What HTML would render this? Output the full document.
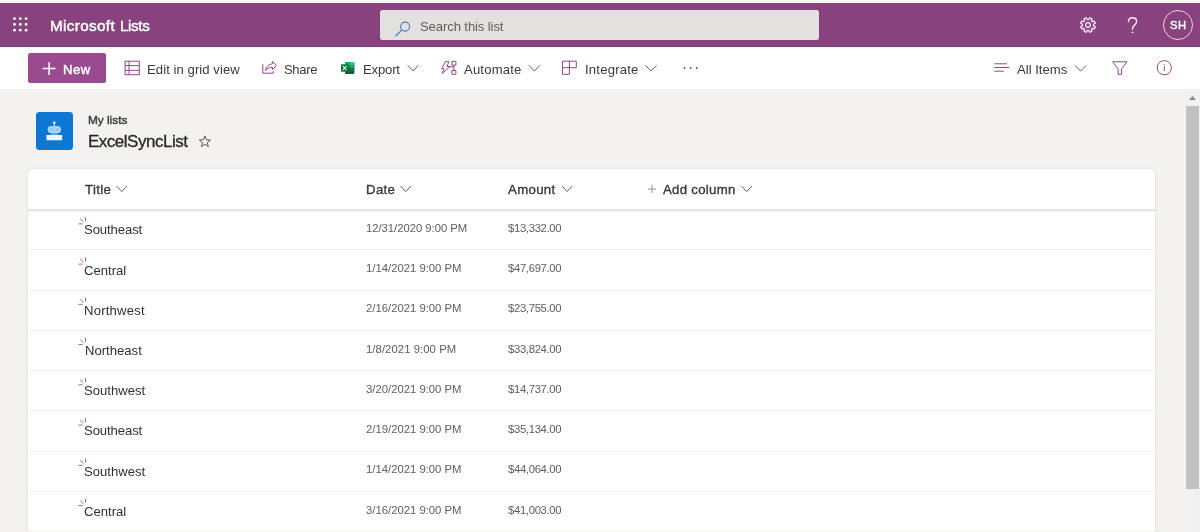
<!DOCTYPE html>
<html lang="en">
<head>
<meta charset="utf-8">
<title>ExcelSyncList - Microsoft Lists</title>
<style>
html,body{margin:0;padding:0}
body{width:1200px;height:532px;overflow:hidden;background:#f3f2f1;position:relative;
 font-family:"Liberation Sans",sans-serif;color:#323130;-webkit-font-smoothing:antialiased}
*{box-sizing:border-box}
.abs{position:absolute}
.t{position:absolute;white-space:nowrap;line-height:1;display:block;margin:0;will-change:transform}
svg{position:absolute;overflow:visible}
/* suite header */
#topline{left:0;top:0;width:1200px;height:3px;background:#faf7fa}
#suite{left:0;top:3px;width:1200px;height:44px;background:#88437f;border-bottom:1px solid #7a3c72}
#search{left:379.5px;top:10.4px;width:439.8px;height:29.8px;background:#e3e1df;border-radius:2.5px}
#avatar{left:1163px;top:10px;width:30px;height:30px;border-radius:50%;border:1.2px solid #e9cfe5}
/* command bar */
#cmd{left:0;top:47px;width:1200px;height:42px;background:#fff}
#newbtn{left:28.3px;top:53.1px;width:77.6px;height:30px;background:#9a4b90;border-radius:2.5px}
/* list */
#tile{left:35.7px;top:112px;width:37.5px;height:37.5px;border-radius:3.5px;background:#0c78d4}
#card{left:28.2px;top:169px;width:1126.8px;height:380px;background:#fff;border-radius:5px;
 box-shadow:0 0.5px 2.5px rgba(0,0,0,.13)}
.hline{position:absolute;left:28.2px;width:1126.8px;height:1px;background:#f2f1f0}
#hdrline{top:209px;height:1.6px;background:#e4e3e2;box-shadow:0 1px 2px rgba(0,0,0,.07)}
/* scrollbar */
#sbtrack{left:1185px;top:89px;width:15px;height:443px;background:#f1f1f1}
#sbthumb{left:1186.2px;top:106px;width:13px;height:383px;background:#c1c1c1}
#ms1{left:50.44px;top:18.00px;font-size:15.20px;font-weight:400;-webkit-text-stroke:0.44px #ffffff;color:#ffffff;letter-spacing:0.374px}
#ms2{left:120.38px;top:18.00px;font-size:15.20px;font-weight:400;-webkit-text-stroke:0.44px #ffffff;color:#ffffff;letter-spacing:-0.357px}
#srch{left:420.01px;top:20.00px;font-size:13.10px;font-weight:400;color:#605e5c;letter-spacing:-0.110px}
#sh{left:1169.94px;top:20.00px;font-size:11.20px;font-weight:400;-webkit-text-stroke:0.44px #ffffff;color:#ffffff;letter-spacing:0.589px}
#new{left:63.22px;top:63.00px;font-size:13.10px;font-weight:400;-webkit-text-stroke:0.44px #ffffff;color:#ffffff;letter-spacing:0.460px}
#edit{left:147.41px;top:63.00px;font-size:13.10px;font-weight:400;color:#3b3a39;letter-spacing:0.067px}
#share{left:284.11px;top:63.00px;font-size:13.10px;font-weight:400;color:#3b3a39;letter-spacing:-0.365px}
#export{left:362.82px;top:63.00px;font-size:13.10px;font-weight:400;color:#3b3a39;letter-spacing:-0.168px}
#auto{left:463.85px;top:63.00px;font-size:13.10px;font-weight:400;color:#3b3a39;letter-spacing:0.174px}
#integ{left:584.78px;top:63.00px;font-size:13.10px;font-weight:400;color:#3b3a39;letter-spacing:0.211px}
#allit{left:1017.25px;top:63.00px;font-size:13.10px;font-weight:400;color:#3b3a39;letter-spacing:-0.001px}
#mylists{left:87.97px;top:115.00px;font-size:11.80px;font-weight:400;-webkit-text-stroke:0.44px #3b3a39;color:#3b3a39;letter-spacing:0.000px}
#lname{left:87.74px;top:133.00px;font-size:17.00px;font-weight:400;-webkit-text-stroke:0.26px #252423;color:#252423;letter-spacing:-0.490px}
#hTitle{left:85.00px;top:183.00px;font-size:13.20px;font-weight:400;-webkit-text-stroke:0.37px #3b3a39;color:#3b3a39;letter-spacing:0.328px}
#hDate{left:365.84px;top:183.00px;font-size:13.20px;font-weight:400;-webkit-text-stroke:0.37px #3b3a39;color:#3b3a39;letter-spacing:0.357px}
#hAmt{left:507.85px;top:183.00px;font-size:13.20px;font-weight:400;-webkit-text-stroke:0.37px #3b3a39;color:#3b3a39;letter-spacing:0.338px}
#hAdd{left:662.66px;top:183.00px;font-size:13.20px;font-weight:400;-webkit-text-stroke:0.37px #3b3a39;color:#3b3a39;letter-spacing:0.298px}
#rt0{left:83.54px;top:223.00px;font-size:13.10px;font-weight:400;color:#323130;letter-spacing:-0.091px}
#rd0{left:365.97px;top:223.00px;font-size:11.30px;font-weight:400;color:#605e5c;letter-spacing:-0.030px}
#ra0{left:507.76px;top:223.00px;font-size:11.30px;font-weight:400;color:#605e5c;letter-spacing:-0.326px}
#rt1{left:83.98px;top:264.00px;font-size:13.10px;font-weight:400;color:#323130;letter-spacing:0.000px}
#rd1{left:366.21px;top:263.00px;font-size:11.30px;font-weight:400;color:#605e5c;letter-spacing:0.000px}
#ra1{left:507.76px;top:263.00px;font-size:11.30px;font-weight:400;color:#605e5c;letter-spacing:-0.326px}
#rt2{left:84.01px;top:304.00px;font-size:13.10px;font-weight:400;color:#323130;letter-spacing:0.214px}
#rd2{left:366.21px;top:303.00px;font-size:11.30px;font-weight:400;color:#605e5c;letter-spacing:0.000px}
#ra2{left:507.76px;top:303.00px;font-size:11.30px;font-weight:400;color:#605e5c;letter-spacing:-0.326px}
#rt3{left:84.58px;top:344.00px;font-size:13.10px;font-weight:400;color:#323130;letter-spacing:0.000px}
#rd3{left:365.97px;top:344.00px;font-size:11.30px;font-weight:400;color:#605e5c;letter-spacing:0.066px}
#ra3{left:507.76px;top:344.00px;font-size:11.30px;font-weight:400;color:#605e5c;letter-spacing:-0.326px}
#rt4{left:83.98px;top:384.00px;font-size:13.10px;font-weight:400;color:#323130;letter-spacing:0.000px}
#rd4{left:366.21px;top:384.00px;font-size:11.30px;font-weight:400;color:#605e5c;letter-spacing:0.000px}
#ra4{left:507.76px;top:384.00px;font-size:11.30px;font-weight:400;color:#605e5c;letter-spacing:-0.326px}
#rt5{left:83.54px;top:424.00px;font-size:13.10px;font-weight:400;color:#323130;letter-spacing:-0.091px}
#rd5{left:366.21px;top:424.00px;font-size:11.30px;font-weight:400;color:#605e5c;letter-spacing:0.000px}
#ra5{left:507.76px;top:424.00px;font-size:11.30px;font-weight:400;color:#605e5c;letter-spacing:-0.326px}
#rt6{left:83.98px;top:465.00px;font-size:13.10px;font-weight:400;color:#323130;letter-spacing:0.000px}
#rd6{left:366.21px;top:464.00px;font-size:11.30px;font-weight:400;color:#605e5c;letter-spacing:0.000px}
#ra6{left:507.76px;top:464.00px;font-size:11.30px;font-weight:400;color:#605e5c;letter-spacing:-0.326px}
#rt7{left:83.98px;top:505.00px;font-size:13.10px;font-weight:400;color:#323130;letter-spacing:0.000px}
#rd7{left:366.21px;top:505.00px;font-size:11.30px;font-weight:400;color:#605e5c;letter-spacing:0.000px}
#ra7{left:507.76px;top:505.00px;font-size:11.30px;font-weight:400;color:#605e5c;letter-spacing:-0.326px}
</style>
</head>
<body>
<div class="abs" id="topline"></div>
<header role="banner">
<div class="abs" id="suite"></div>

<svg id="waffle" style="left:0;top:0" width="1" height="1" fill="#fff">
<circle cx="14.5" cy="18.6" r="1.4"/>
<circle cx="20.3" cy="18.6" r="1.4"/>
<circle cx="26.1" cy="18.6" r="1.4"/>
<circle cx="14.5" cy="24.4" r="1.4"/>
<circle cx="20.3" cy="24.4" r="1.4"/>
<circle cx="26.1" cy="24.4" r="1.4"/>
<circle cx="14.5" cy="30.2" r="1.4"/>
<circle cx="20.3" cy="30.2" r="1.4"/>
<circle cx="26.1" cy="30.2" r="1.4"/>
</svg>
<div class="abs" id="search"></div>
<svg id="srchico" style="left:0;top:0" width="1" height="1" fill="none" stroke="#4f7fba" stroke-width="1.15" stroke-linecap="round">
<circle cx="405.1" cy="26.6" r="4.5"/><path d="M401.8 30 L395.8 36"/></svg>
<svg id="gear" style="left:1078.8px;top:16.2px" width="18" height="18" viewBox="0 0 18 18" fill="none" stroke="#fbeef9" stroke-width="1.25" stroke-linejoin="round">
<path d="M14.45 9.77 L16.26 10.68 L15.32 12.95 L13.39 12.31 L12.31 13.39 L12.95 15.32 L10.68 16.26 L9.77 14.45 L8.23 14.45 L7.32 16.26 L5.05 15.32 L5.69 13.39 L4.61 12.31 L2.68 12.95 L1.74 10.68 L3.55 9.77 L3.55 8.23 L1.74 7.32 L2.68 5.05 L4.61 5.69 L5.69 4.61 L5.05 2.68 L7.32 1.74 L8.23 3.55 L9.77 3.55 L10.68 1.74 L12.95 2.68 L12.31 4.61 L13.39 5.69 L15.32 5.05 L16.26 7.32 L14.45 8.23Z"/><circle cx="9" cy="9" r="2.3"/></svg>
<svg id="help" style="left:0;top:0" width="1" height="1" fill="none" stroke="#fbeef9" stroke-width="1.35" stroke-linecap="round">
<path d="M1128.4 21.8 C1128.4 19.3 1130.2 17.7 1132.6 17.7 C1135 17.7 1136.6 19.3 1136.6 21.4 C1136.6 24.9 1132.4 25.3 1132.4 29.2"/><circle cx="1132.4" cy="32.3" r="0.6" fill="#fff" stroke-width="0.5"/></svg>
<div class="abs" id="avatar"></div>

<span class="t" id="ms1">Microsoft </span>
<span class="t" id="ms2">Lists</span>
<span class="t" id="srch">Search this list</span>
<span class="t" id="sh">SH</span>
</header>
<nav aria-label="Command bar">
<div class="abs" id="cmd"></div>

<div class="abs" id="newbtn"></div>
<svg id="plus" style="left:0;top:0" width="1" height="1" stroke="#fff" stroke-width="1.5" fill="none"><path d="M49.1 62.2 V75 M42.7 68.6 H55.5"/></svg>
<svg id="icogrid" style="left:0;top:0" width="1" height="1" fill="none" stroke="#8c4a86" stroke-width="1"><rect x="125.1" y="61.2" width="14.2" height="13.5"/><path d="M129 61.2 V74.7 M125.1 65.6 H139.3 M125.1 70.3 H139.3"/></svg>
<svg id="icoshare" style="left:0;top:0" width="1" height="1" fill="none" stroke="#8c4a86" stroke-width="1" stroke-linejoin="round"><path d="M262.8 64.3 V73.2 H273.3 V71.2"/><path d="M272.4 61.6 L276.5 65.6 L272.4 69.6 V67.4 C269.3 67.3 267.2 68.3 265.6 70.4 C265.9 66.6 268.4 64.2 272.4 63.9 Z"/></svg>
<svg id="icoxl" style="left:0;top:0" width="1" height="1">
<rect x="345" y="62" width="9.3" height="12" rx="0.7" fill="#185c37"/>
<rect x="345" y="62" width="4.7" height="3" fill="#21a366"/><rect x="349.6" y="62" width="4.7" height="3" fill="#33c481"/>
<rect x="345" y="65" width="4.7" height="3" fill="#107c41"/><rect x="349.6" y="65" width="4.7" height="3" fill="#21a366"/>
<rect x="345" y="68" width="4.7" height="3" fill="#185c37"/><rect x="349.6" y="68" width="4.7" height="3" fill="#107c41"/>
<rect x="341" y="64.3" width="7.4" height="7.4" rx="0.7" fill="#107c41"/>
<path d="M343 66 L346.4 70 M346.4 66 L343 70" stroke="#fff" stroke-width="1.1" fill="none"/>
</svg>
<svg class="chev" style="left:0;top:0" width="1" height="1"><path d="M407.80 65.30 L413.10 71.00 L418.40 65.30" fill="none" stroke="#605e5c" stroke-width="1.00"/></svg>
<svg id="icoauto" style="left:0;top:0" width="1" height="1" fill="none" stroke="#8c4a86" stroke-width="1" stroke-linejoin="round"><path d="M445.3 61.7 H448.9 L446.9 66.5 H450 L442.2 73.4 L444.1 68.6 H441.6 Z"/><rect x="451.9" y="61.3" width="4" height="3.8"/><rect x="451.9" y="70.5" width="4" height="3.8"/><path d="M453.9 65.1 V70.5 M450 66.8 H453.9"/></svg>
<svg class="chev" style="left:0;top:0" width="1" height="1"><path d="M528.90 65.30 L534.35 71.10 L539.80 65.30" fill="none" stroke="#605e5c" stroke-width="1.00"/></svg>
<svg id="icointeg" style="left:0;top:0" width="1" height="1" fill="none" stroke="#8c4a86" stroke-width="1"><path d="M562.5 61.2 H576.3 V67.7 H562.5 Z M569.4 61.2 V74.3 H562.5 V67.7"/></svg>
<svg class="chev" style="left:0;top:0" width="1" height="1"><path d="M645.40 65.30 L651.00 70.90 L656.60 65.30" fill="none" stroke="#605e5c" stroke-width="1.00"/></svg>
<svg id="more" style="left:0;top:0" width="1" height="1" fill="#3b3a39"><circle cx="684.5" cy="68.1" r="0.95"/><circle cx="690.7" cy="68.1" r="0.95"/><circle cx="696.8" cy="68.1" r="0.95"/></svg>
<svg id="icoview" style="left:0;top:0" width="1" height="1" fill="none" stroke="#8c4a86" stroke-width="1"><path d="M994.3 63.8 H1007 M994.3 67.5 H1009.3 M994.3 71.2 H1003.7"/></svg>
<svg class="chev" style="left:0;top:0" width="1" height="1"><path d="M1075.10 65.50 L1080.55 71.10 L1086.00 65.50" fill="none" stroke="#605e5c" stroke-width="1.00"/></svg>
<svg id="icofilter" style="left:0;top:0" width="1" height="1" fill="none" stroke="#8c4a86" stroke-width="1" stroke-linejoin="round"><path d="M1112.6 61.8 H1127 L1121.6 68.8 V74.3 H1118.1 V68.8 Z"/></svg>
<svg id="icoinfo" style="left:0;top:0" width="1" height="1" fill="none" stroke="#8c4a86" stroke-width="1"><circle cx="1164.3" cy="67.7" r="7.1"/><path d="M1164.3 66.4 V71"/><circle cx="1164.3" cy="64.7" r="0.4" fill="#8c4a86" stroke-width="0.5"/></svg>

<span class="t" id="new">New</span>
<span class="t" id="edit">Edit in grid view</span>
<span class="t" id="share">Share</span>
<span class="t" id="export">Export</span>
<span class="t" id="auto">Automate</span>
<span class="t" id="integ">Integrate</span>
<span class="t" id="allit">All Items</span>
</nav>
<main>

<div class="abs" id="tile"></div>
<svg id="robot" style="left:-0.3px;top:0" width="1" height="1">
<circle cx="54.3" cy="122.8" r="1.35" fill="#e8f3fc"/><rect x="53.8" y="123" width="1" height="3.4" fill="#cfe6f9"/>
<rect x="47.7" y="126" width="13.3" height="7.2" rx="3.4" fill="#a9d3f5"/>
<circle cx="51.6" cy="129.3" r="1.5" fill="#8cc2f0"/><circle cx="57" cy="129.3" r="1.5" fill="#8cc2f0"/>
<rect x="51" y="133.2" width="6.6" height="1.8" fill="#5aa6e6"/>
<rect x="46.4" y="134.9" width="15.8" height="5.3" rx="0.6" fill="#eef6fd"/>
</svg>
<svg id="star" style="left:0;top:0" width="1" height="1" fill="none" stroke="#55534f" stroke-width="0.95" stroke-linejoin="miter"><path d="M204.90 135.90 L206.37 139.78 L210.51 139.98 L207.28 142.57 L208.37 146.57 L204.90 144.30 L201.43 146.57 L202.52 142.57 L199.29 139.98 L203.43 139.78Z"/></svg>
<div class="abs" id="card"></div>
<div class="hline" id="hdrline"></div>
<div class="hline" style="top:249.43px"></div>
<div class="hline" style="top:289.66px"></div>
<div class="hline" style="top:329.89px"></div>
<div class="hline" style="top:370.12px"></div>
<div class="hline" style="top:410.35px"></div>
<div class="hline" style="top:450.58px"></div>
<div class="hline" style="top:490.81px"></div>
<div class="hline" style="top:531.04px"></div>
<svg id="newglyphs" style="left:0;top:0" width="1" height="1" fill="none" stroke="#a0609b" stroke-width="0.95"><path d="M78.4 223.90 H82.7 M80.2 218.90 L83.5 222.00 M85.5 217.20 V221.10"/><path d="M78.4 264.13 H82.7 M80.2 259.13 L83.5 262.23 M85.5 257.43 V261.33"/><path d="M78.4 304.36 H82.7 M80.2 299.36 L83.5 302.46 M85.5 297.66 V301.56"/><path d="M78.4 344.59 H82.7 M80.2 339.59 L83.5 342.69 M85.5 337.89 V341.79"/><path d="M78.4 384.82 H82.7 M80.2 379.82 L83.5 382.92 M85.5 378.12 V382.02"/><path d="M78.4 425.05 H82.7 M80.2 420.05 L83.5 423.15 M85.5 418.35 V422.25"/><path d="M78.4 465.28 H82.7 M80.2 460.28 L83.5 463.38 M85.5 458.58 V462.48"/><path d="M78.4 505.51 H82.7 M80.2 500.51 L83.5 503.61 M85.5 498.81 V502.71"/></svg>
<svg class="chev" style="left:0;top:0" width="1" height="1"><path d="M116.50 186.00 L121.75 191.60 L127.00 186.00" fill="none" stroke="#605e5c" stroke-width="1.00"/></svg>
<svg class="chev" style="left:0;top:0" width="1" height="1"><path d="M400.60 186.00 L405.75 191.60 L410.90 186.00" fill="none" stroke="#605e5c" stroke-width="1.00"/></svg>
<svg class="chev" style="left:0;top:0" width="1" height="1"><path d="M562.00 186.00 L567.10 191.60 L572.20 186.00" fill="none" stroke="#605e5c" stroke-width="1.00"/></svg>
<svg class="chev" style="left:0;top:0" width="1" height="1"><path d="M741.50 186.00 L746.70 191.60 L751.90 186.00" fill="none" stroke="#605e5c" stroke-width="1.00"/></svg>
<svg id="addplus" style="left:0;top:0" width="1" height="1" fill="none" stroke="#8a8886" stroke-width="0.9"><path d="M652 185 V193.2 M647.9 189.1 H656.1"/></svg>

<span class="t" id="mylists">My lists</span>
<h1 class="t" id="lname">ExcelSyncList</h1>
<div class="row hdr" role="row"><span class="t" id="hTitle">Title</span>
<span class="t" id="hDate">Date</span>
<span class="t" id="hAmt">Amount</span>
<span class="t" id="hAdd">Add column</span></div>
<div class="row" role="row"><span class="t" id="rt0">Southeast</span>
<span class="t" id="rd0">12/31/2020 9:00 PM</span>
<span class="t" id="ra0">$13,332.00</span></div>
<div class="row" role="row"><span class="t" id="rt1">Central</span>
<span class="t" id="rd1">1/14/2021 9:00 PM</span>
<span class="t" id="ra1">$47,697.00</span></div>
<div class="row" role="row"><span class="t" id="rt2">Northwest</span>
<span class="t" id="rd2">2/16/2021 9:00 PM</span>
<span class="t" id="ra2">$23,755.00</span></div>
<div class="row" role="row"><span class="t" id="rt3">Northeast</span>
<span class="t" id="rd3">1/8/2021 9:00 PM</span>
<span class="t" id="ra3">$33,824.00</span></div>
<div class="row" role="row"><span class="t" id="rt4">Southwest</span>
<span class="t" id="rd4">3/20/2021 9:00 PM</span>
<span class="t" id="ra4">$14,737.00</span></div>
<div class="row" role="row"><span class="t" id="rt5">Southeast</span>
<span class="t" id="rd5">2/19/2021 9:00 PM</span>
<span class="t" id="ra5">$35,134.00</span></div>
<div class="row" role="row"><span class="t" id="rt6">Southwest</span>
<span class="t" id="rd6">1/14/2021 9:00 PM</span>
<span class="t" id="ra6">$44,064.00</span></div>
<div class="row" role="row"><span class="t" id="rt7">Central</span>
<span class="t" id="rd7">3/16/2021 9:00 PM</span>
<span class="t" id="ra7">$41,003.00</span></div>
</main>
<div class="abs" id="sbtrack"></div>
<div class="abs" id="sbthumb"></div>
<svg style="left:1189.3px;top:96.3px" width="7" height="4" viewBox="0 0 7 4"><path d="M0 4 L3.5 0 L7 4Z" fill="#8a8a8a"/></svg>
</body>
</html>
